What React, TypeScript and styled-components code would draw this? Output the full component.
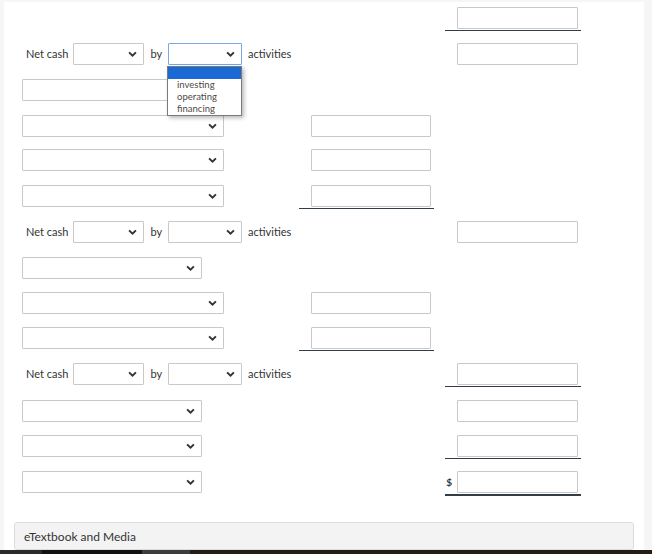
import React from "react";
import styled, { createGlobalStyle } from "styled-components";

const Global = createGlobalStyle`
  html, body { margin: 0; padding: 0; background: #f6f6f6; }
  body { font-family: Lato, "Open Sans", Arial, sans-serif; color: #333; }
  * { box-sizing: border-box; }
`;

const Shell = styled.div`
  width: 652px;
  height: 554px;
  display: flex;
  flex-direction: column;
  background: #f6f6f6;
  padding-top: 2px;
  overflow: hidden;
`;

const Body = styled.div`
  flex: 1;
  display: flex;
`;

const Main = styled.main`
  width: 640px;
  margin-left: 4px;
  background: #ffffff;
  display: flex;
  flex-direction: column;
  padding-top: 3px;
`;

const Row = styled.div<{ $mt: number }>`
  display: grid;
  grid-template-columns: 277px 135px 11px 136px;
  grid-template-areas: "left mid . right";
  margin-top: ${(p) => p.$mt}px;
  margin-left: 18px;
`;

const LeftCell = styled.div`
  grid-area: left;
  height: 24px;
  display: flex;
  align-items: flex-start;
`;

const NumCell = styled.div<{ $line: "none" | "single" | "double"; $area: string }>`
  grid-area: ${(p) => p.$area};
  display: flex;
  align-items: flex-start;
  justify-content: flex-end;
  padding-right: 3px;
  padding-bottom: 1px;
  height: ${(p) => (p.$line === "double" ? 25 : 24)}px;
  border-bottom: ${(p) =>
    p.$line === "none"
      ? "1px solid transparent"
      : p.$line === "double"
      ? "2px solid #333d47"
      : "1px solid #333d47"};
`;

const Input = styled.div<{ $w: number }>`
  width: ${(p) => p.$w}px;
  height: 22px;
  border: 1px solid #c8c8c8;
  border-radius: 1px;
  background: #fff;
`;

const Dollar = styled.span`
  font-size: 10px;
  font-weight: 700;
  color: #2f3d4c;
  line-height: 22px;
  margin-right: 5px;
`;

const SelectBox = styled.div<{ $w: number; $focus?: boolean }>`
  position: relative;
  width: ${(p) => p.$w}px;
  height: 22px;
  border: 1px solid ${(p) => (p.$focus ? "#79a9e3" : "#c8c8c8")};
  border-radius: 1px;
  background: #fff;
  display: flex;
  align-items: center;
  justify-content: flex-end;
  padding-right: 6px;
  flex-shrink: 0;
`;

const Label = styled.span<{ $ml: number; $mr: number }>`
  font-size: 11px;
  color: #333;
  line-height: 22px;
  margin-left: ${(p) => p.$ml}px;
  margin-right: ${(p) => p.$mr}px;
  white-space: nowrap;
`;

const NetLine = styled.div`
  display: flex;
  align-items: center;
  height: 22px;
`;

const Menu = styled.ul`
  position: absolute;
  top: 22px;
  left: -2px;
  width: 75px;
  margin: 0;
  padding: 0;
  list-style: none;
  background: #fff;
  border: 1px solid #7a7a7a;
  box-shadow: 2px 2px 4px rgba(0, 0, 0, 0.28);
  z-index: 5;
`;

const Option = styled.li<{ $active?: boolean }>`
  height: 12px;
  line-height: 12px;
  font-size: 9.5px;
  color: #4f4a45;
  padding-left: 9px;
  background: ${(p) => (p.$active ? "#1a69d4" : "transparent")};
`;

const Panel = styled.div`
  margin: 26px 0 0 10px;
  width: 620px;
  height: 28px;
  background: #f3f3f3;
  border: 1px solid #dcdcdc;
  border-radius: 3px;
  display: flex;
  align-items: center;
  padding-left: 9px;
  font-size: 12px;
  color: #333;
`;

const TaskBar = styled.div`
  height: 4px;
  background: linear-gradient(
    to right,
    #2a2a2a 0 42px,
    #111 42px 142px,
    #3c3c3c 142px 190px,
    #221d18 190px
  );
`;

const Chevron = () => (
  <svg width="9" height="6" viewBox="0 0 10 6" aria-hidden>
    <path d="M1.2 1.2 L5 4.8 L8.8 1.2" fill="none" stroke="#333" strokeWidth="2.2" />
  </svg>
);

const Select = ({ w, focus, open }: { w: number; focus?: boolean; open?: boolean }) => (
  <SelectBox $w={w} $focus={focus}>
    <Chevron />
    {open && (
      <Menu>
        <Option $active>&nbsp;</Option>
        <Option>investing</Option>
        <Option>operating</Option>
        <Option>financing</Option>
      </Menu>
    )}
  </SelectBox>
);

const NetCash = ({ open }: { open?: boolean }) => (
  <NetLine>
    <Label $ml={4} $mr={5}>Net cash</Label>
    <Select w={71} />
    <Label $ml={6} $mr={6}>by</Label>
    <Select w={74} focus={open} open={open} />
    <Label $ml={6} $mr={0}>activities</Label>
  </NetLine>
);

type Left = { kind: "net"; open?: boolean } | { kind: "select"; w: number } | null;
type Num = { line: "none" | "single" | "double"; dollar?: boolean } | null;
type RowDef = { mt: number; left: Left; mid: Num; right: Num };

const rows: RowDef[] = [
  { mt: 2, left: null, mid: null, right: { line: "single" } },
  { mt: 12, left: { kind: "net", open: true }, mid: null, right: { line: "none" } },
  { mt: 12, left: { kind: "select", w: 180 }, mid: null, right: null },
  { mt: 12, left: { kind: "select", w: 202 }, mid: { line: "none" }, right: null },
  { mt: 10, left: { kind: "select", w: 202 }, mid: { line: "none" }, right: null },
  { mt: 12, left: { kind: "select", w: 202 }, mid: { line: "single" }, right: null },
  { mt: 12, left: { kind: "net" }, mid: null, right: { line: "none" } },
  { mt: 12, left: { kind: "select", w: 180 }, mid: null, right: null },
  { mt: 11, left: { kind: "select", w: 202 }, mid: { line: "none" }, right: null },
  { mt: 11, left: { kind: "select", w: 202 }, mid: { line: "single" }, right: null },
  { mt: 12, left: { kind: "net" }, mid: null, right: { line: "single" } },
  { mt: 13, left: { kind: "select", w: 180 }, mid: null, right: { line: "none" } },
  { mt: 11, left: { kind: "select", w: 180 }, mid: null, right: { line: "single" } },
  { mt: 12, left: { kind: "select", w: 180 }, mid: null, right: { line: "double", dollar: true } },
];

const renderNum = (n: Num, w: number, area: string) =>
  n ? (
    <NumCell $line={n.line} $area={area}>
      {n.dollar && <Dollar>$</Dollar>}
      <Input $w={w} />
    </NumCell>
  ) : null;

export default function App() {
  return (
    <>
      <Global />
      <Shell>
        <Body>
          <Main>
            {rows.map((r, i) => (
              <Row key={i} $mt={r.mt}>
                <LeftCell>
                  {r.left?.kind === "net" && <NetCash open={r.left.open} />}
                  {r.left?.kind === "select" && <Select w={r.left.w} />}
                </LeftCell>
                {renderNum(r.mid, 120, "mid")}
                {renderNum(r.right, 121, "right")}
              </Row>
            ))}
            <Panel>eTextbook and Media</Panel>
          </Main>
        </Body>
        <TaskBar />
      </Shell>
    </>
  );
}
